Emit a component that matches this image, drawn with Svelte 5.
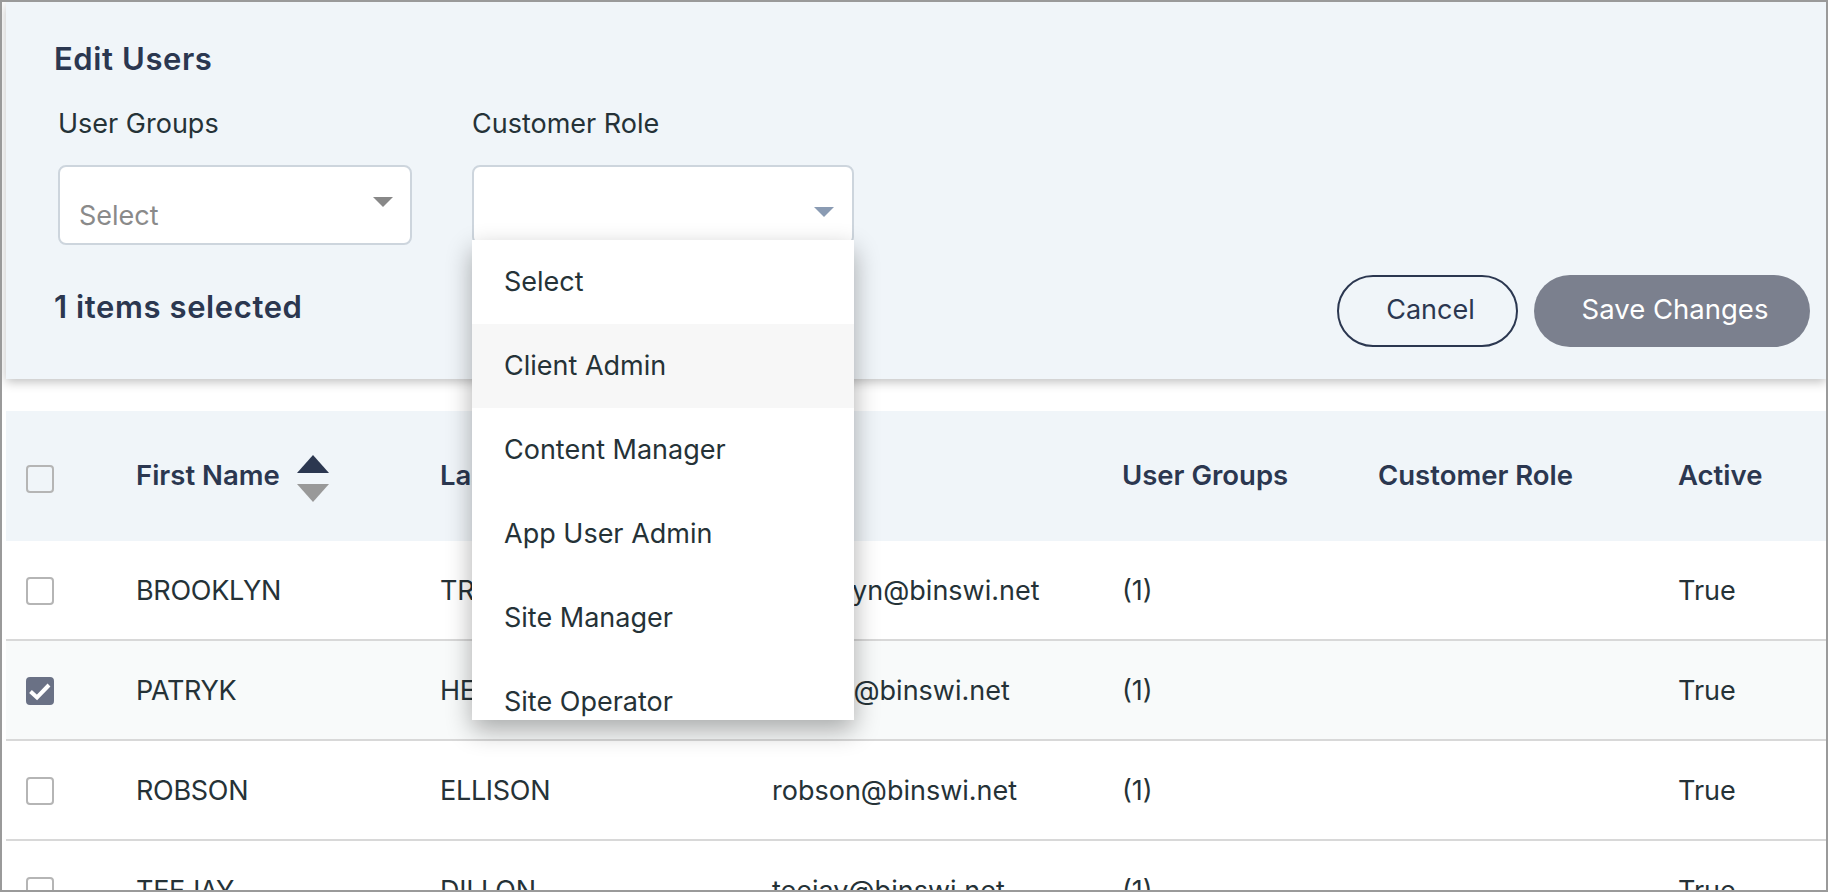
<script>
  const options = ['Select', 'Client Admin', 'Content Manager', 'App User Admin', 'Site Manager', 'Site Operator'];
  const rows = [
    { first: 'BROOKLYN', last: 'TRAN', email: 'brooklyn@binswi.net', checked: false },
    { first: 'PATRYK', last: 'HEATH', email: 'patryk@binswi.net', checked: true },
    { first: 'ROBSON', last: 'ELLISON', email: 'robson@binswi.net', checked: false },
    { first: 'TEEJAY', last: 'DILLON', email: 'teejay@binswi.net', checked: false }
  ];
</script>

<div class="frame">
  <section class="panel">
    <h2 class="title">Edit Users</h2>
    <div class="fields">
      <div class="field first">
        <div class="label">User Groups</div>
        <div class="select">
          <span class="placeholder">Select</span>
          <span class="caret grey"></span>
        </div>
      </div>
      <div class="field second">
        <div class="label">Customer Role</div>
        <div class="select">
          <span class="caret blue"></span>
        </div>
        <ul class="menu">
          {#each options as o, i}
            <li class:hover={i === 1}>{o}</li>
          {/each}
        </ul>
      </div>
    </div>
    <div class="footer">
      <div class="count">1 items selected</div>
      <div class="buttons">
        <button class="btn cancel">Cancel</button>
        <button class="btn save">Save Changes</button>
      </div>
    </div>
  </section>

  <div class="table">
    <div class="tr head">
      <div class="cb-cell"><span class="cb"></span></div>
      <div class="th sortable">First Name
        <span class="sort"><i class="up"></i><i class="down"></i></span>
      </div>
      <div class="th">Last Name</div>
      <div class="th">Email</div>
      <div class="th">User Groups</div>
      <div class="th">Customer Role</div>
      <div class="th">Active</div>
    </div>
    {#each rows as r}
      <div class="tr body" class:sel={r.checked}>
        <div class="cb-cell">
          <span class="cb" class:on={r.checked}>
            {#if r.checked}
              <svg viewBox="0 0 28 28" width="28" height="28"><path d="M4.5 14.5l6.5 6L23 8" fill="none" stroke="#fff" stroke-width="4"/></svg>
            {/if}
          </span>
        </div>
        <div class="name">{r.first}</div>
        <div class="name">{r.last}</div>
        <div>{r.email}</div>
        <div>(1)</div>
        <div></div>
        <div>True</div>
      </div>
    {/each}
  </div>
</div>

<style>
  :global(body) { margin: 0; background: #fff; }
  .frame {
    box-sizing: border-box;
    width: 1828px;
    height: 892px;
    border: 2px solid #9a9a9a;
    padding-left: 4px;
    overflow: hidden;
    background: #fff;
    font-family: Inter, "Noto Sans", sans-serif;
    font-size: 27px;
    color: #253237;
  }
  .panel {
    box-sizing: border-box;
    height: 377px;
    padding: 39px 16px 30px 48px;
    background: #f0f5f9;
    box-shadow: 0 3px 10px rgba(0, 0, 0, 0.25);
    position: relative;
  }
  .title {
    margin: 0;
    height: 36px;
    line-height: 36px;
    font-size: 31px;
    letter-spacing: 0.6px;
    font-weight: 600;
    color: #2b3750;
  }
  .fields { display: flex; margin-top: 30px; padding-left: 4px; }
  .field { position: relative; }
  .field.first { width: 354px; margin-right: 60px; }
  .field.second { width: 382px; }
  .label { height: 32px; line-height: 32px; margin-bottom: 26px; position: relative; top: 1px; }
  .select {
    box-sizing: border-box;
    height: 80px;
    border: 2px solid #cdd5dd;
    border-radius: 8px;
    background: #fff;
    position: relative;
    padding: 31px 0 0 19px;
    line-height: 36px;
  }
  .placeholder { color: #8a8a8a; }
  .caret {
    position: absolute;
    width: 0;
    height: 0;
    border-left: 10px solid transparent;
    border-right: 10px solid transparent;
  }
  .caret.grey { right: 17px; top: 30px; border-top: 10px solid #888; }
  .caret.blue { right: 18px; top: 40px; border-top: 10px solid #8a9bb3; }
  .menu {
    position: absolute;
    left: 0;
    top: 133px;
    width: 382px;
    height: 480px;
    margin: 0;
    padding: 0;
    list-style: none;
    overflow: hidden;
    background: #fff;
    box-shadow: 0 10px 24px rgba(0, 0, 0, 0.32);
    z-index: 5;
  }
  .menu li {
    height: 84px;
    line-height: 84px;
    padding-left: 32px;
  }
  .menu li.hover { background: #f7f7f7; }
  .footer {
    display: flex;
    justify-content: space-between;
    align-items: center;
    margin-top: 30px;
  }
  .count {
    font-size: 31px;
    letter-spacing: 0.6px;
    font-weight: 600;
    color: #2b3750;
    margin-bottom: 10px;
  }
  .buttons { display: flex; gap: 16px; }
  .btn {
    box-sizing: border-box;
    height: 72px;
    border-radius: 36px;
    font-family: inherit;
    font-size: 27px;
    padding: 0 0 4px 6px;
  }
  .cancel { width: 181px; border: 2px solid #2b3750; background: transparent; color: #2b3750; }
  .save { width: 276px; border: 0; background: #7b808e; color: #fff; font-size: 27.5px; }
  .table { margin-top: 32px; }
  .tr {
    display: grid;
    grid-template-columns: 130px 304px 332px 350px 256px 300px 1fr;
    align-items: center;
  }
  .head {
    height: 130px;
    background: #f0f5f9;
    font-weight: 600;
    font-size: 27.5px;
    color: #2b3750;
  }
  .head .cb-cell { margin-top: 5px; }
  .th { margin-top: -3px; }
  .sortable { display: flex; align-items: center; gap: 17px; }
  .sort { display: flex; flex-direction: column; gap: 11px; margin-top: 8px; }
  .sort i { display: block; width: 0; height: 0; border-left: 16px solid transparent; border-right: 16px solid transparent; }
  .up { border-bottom: 18px solid #2b3750; }
  .down { border-top: 18px solid #999; }
  .cb-cell { padding-left: 20px; line-height: 0; }
  .cb {
    display: inline-block;
    box-sizing: border-box;
    width: 28px;
    height: 28px;
    border: 2px solid #b5b5b5;
    border-radius: 4px;
    position: relative;
  }
  .body .cb-cell { margin-top: 2px; }
  .body .cb { background: #fff; }
  .body .cb.on { background: #6a7185; border-color: #6a7185; }
  .cb svg { position: absolute; left: -2px; top: -2px; }
  .body { height: 100px; border-bottom: 2px solid #d8d8d8; box-sizing: border-box; }
  .body.sel { background: #f8fafa; }
  .name { letter-spacing: -0.3px; }
</style>
